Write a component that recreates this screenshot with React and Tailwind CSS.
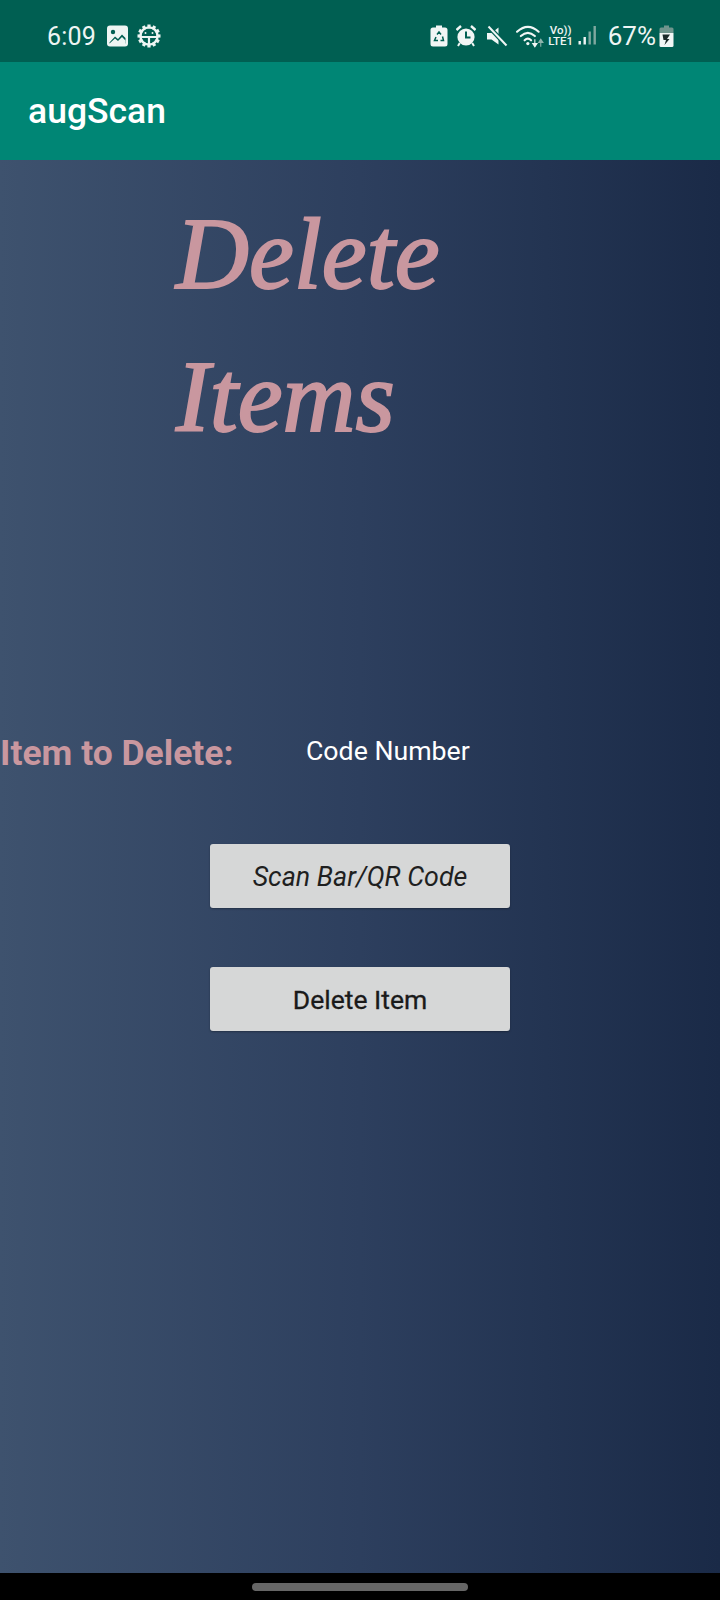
import React from "react";

const roboto = "font-['Roboto',sans-serif]";

function ImageIcon() {
  return (
    <svg width="21" height="22" viewBox="0 0 21 22" className="shrink-0">
      <rect x="0" y="0.5" width="21" height="21" rx="3" fill="#eef5f3" />
      <circle cx="6" cy="7" r="2.2" fill="#005f52" />
      <path d="M2.5 17.5 L8 11.5 L11 14 L15 9.5 L18.5 13 V18.5 H2.5 Z" fill="#005f52" />
      <path d="M2.5 18.5 L8 13.5 L11 16 L15 12 L18.5 15.5 V19 H2.5 Z" fill="#eef5f3" />
    </svg>
  );
}

function GearIcon() {
  const teeth = Array.from({ length: 12 }, (_, i) => i * 30);
  return (
    <svg width="24" height="24" viewBox="0 0 24 24" className="shrink-0">
      {teeth.map((a) => (
        <rect key={a} x="10.4" y="0.5" width="3.2" height="4" fill="#eef5f3" transform={`rotate(${a} 12 12)`} />
      ))}
      <circle cx="12" cy="12" r="8.6" fill="none" stroke="#eef5f3" strokeWidth="2.4" />
      <path d="M4 13 H20 M12 13 V20" stroke="#eef5f3" strokeWidth="2.2" />
      <circle cx="8.5" cy="9" r="1" fill="#eef5f3" />
      <circle cx="15.5" cy="9" r="1" fill="#eef5f3" />
    </svg>
  );
}

function RecycleBattery() {
  return (
    <svg width="18" height="22" viewBox="0 0 18 22" className="shrink-0">
      <path d="M6 0.5 H12 V2.5 H15 Q17.5 2.5 17.5 5 V19 Q17.5 21.5 15 21.5 H3 Q0.5 21.5 0.5 19 V5 Q0.5 2.5 3 2.5 H6 Z" fill="#f1f6f5" />
      <path d="M7 9.5 L9 7 L11 9.5 M12.5 11.5 L13.5 15.5 H10.5 M8 15.5 H4.5 L6 12" fill="none" stroke="#005f52" strokeWidth="1.5" />
    </svg>
  );
}

function AlarmIcon() {
  return (
    <svg width="20" height="22" viewBox="0 0 20 22" className="shrink-0">
      <circle cx="10" cy="12" r="8.6" fill="#f1f6f5" />
      <path d="M0.5 5 L5 1 M19.5 5 L15 1" stroke="#f1f6f5" strokeWidth="2.4" />
      <path d="M3.8 18 L2 21 M16.2 18 L18 21" stroke="#f1f6f5" strokeWidth="2" />
      <path d="M10 6.5 V12.5 H14.5" fill="none" stroke="#005f52" strokeWidth="2" />
    </svg>
  );
}

function MuteIcon() {
  return (
    <svg width="22" height="22" viewBox="0 0 22 22" className="shrink-0">
      <path d="M1 8 H5.5 L12.5 2.5 V19.5 L5.5 14.5 H1 Z" fill="#f1f6f5" />
      <path d="M2.5 1.5 L20.5 20.5" stroke="#005f52" strokeWidth="4.5" />
      <path d="M2.5 1.5 L20.5 20.5" stroke="#f1f6f5" strokeWidth="2" />
    </svg>
  );
}

function WifiIcon() {
  return (
    <svg width="28" height="24" viewBox="0 0 26 22" className="shrink-0">
      <g fill="none" stroke="#f1f6f5" strokeWidth="2" strokeLinecap="round">
        <path d="M1 7 Q11 -2 21 7" />
        <path d="M4.5 11 Q11 5 17.5 11" />
        <path d="M8 15 Q11 12 14 15" />
      </g>
      <circle cx="11" cy="18" r="1.5" fill="#f1f6f5" />
      <path d="M17.5 14 V20 M15.5 18 L17.5 21 L19.5 18 Z" stroke="#f1f6f5" strokeWidth="1" fill="#f1f6f5" />
      <path d="M23 21 V15 M21 17 L23 14 L25 17 Z" stroke="#8fb5ad" strokeWidth="1" fill="#8fb5ad" />
    </svg>
  );
}

function SignalIcon() {
  return (
    <svg width="19" height="22" viewBox="0 0 19 22" className="shrink-0">
      <rect x="0.5" y="16" width="2.4" height="3.5" fill="#f1f6f5" />
      <rect x="5.5" y="12" width="2.4" height="7.5" fill="#f1f6f5" />
      <rect x="10.5" y="6.5" width="2.4" height="13" fill="#7fa89f" />
      <rect x="15.5" y="1" width="2.4" height="18.5" fill="#7fa89f" />
    </svg>
  );
}

function BatteryIcon() {
  return (
    <svg width="15" height="23" viewBox="0 0 15 23" className="shrink-0">
      <path d="M5 0.5 H10 V2.5 H13 Q14.5 2.5 14.5 4 V8 H0.5 V4 Q0.5 2.5 2 2.5 H5 Z" fill="#6f958d" />
      <path d="M0.5 8 H14.5 V20.5 Q14.5 22 13 22 H2 Q0.5 22 0.5 20.5 Z" fill="#f1f6f5" />
      <path d="M3.5 9.5 H11 L8 14 H10.5 L5.5 20 L7 15 H4.5 Z" fill="#1b2a2a" />
    </svg>
  );
}

export default function App() {
  return (
    <div className={`flex h-[1600px] w-[720px] flex-col overflow-hidden bg-black ${roboto}`}>
      <div className="flex h-[62px] shrink-0 items-center bg-[#005f52] pl-[47px] pr-[46px] pt-[10px] text-[#eef5f3]">
        <span className="w-[49px] text-[25px] leading-none tracking-[0.2px]">6:09</span>
        <span className="ml-[11px] flex items-center gap-[9px]">
          <ImageIcon />
          <GearIcon />
        </span>
        <span className="ml-auto flex items-center">
          <RecycleBattery />
          <span className="ml-[8px]"><AlarmIcon /></span>
          <span className="ml-[10px]"><MuteIcon /></span>
          <span className="ml-[8px]"><WifiIcon /></span>
          <span className="ml-[3px] flex w-[28px] flex-col items-center text-[11.5px] font-medium leading-[11.5px]">
            <span>Vo))</span>
            <span>LTE1</span>
          </span>
          <span className="ml-[3px]"><SignalIcon /></span>
          <span className="ml-[11px] text-[26px] leading-none">67%</span>
          <span className="ml-[3px]"><BatteryIcon /></span>
        </span>
      </div>

      <div className="flex h-[98px] shrink-0 items-center bg-[#008675] pl-[28px] pt-[2px] text-[35.5px] font-medium text-white">
        augScan
      </div>

      <div className="flex h-[1413px] shrink-0 flex-col bg-gradient-to-r from-[#3e526e] via-[#2d3f5e] to-[#1a2a47]">
        <div className="ml-[176px] mt-[42px] flex flex-col gap-[38px] font-['Liberation_Serif',cursive] text-[#c9979f] italic">
          <span className="h-[105px] text-[101px] leading-[105px] [-webkit-text-stroke:2px_#c9979f]">Delete</span>
          <span className="h-[105px] text-[101px] leading-[105px] [-webkit-text-stroke:2px_#c9979f]">Items</span>
        </div>

        <div className="mt-[280px] flex h-[44px] items-center">
          <span className="w-[306px] pt-[3px] text-[35.5px] font-bold whitespace-nowrap text-[#c9979f]">Item to Delete:</span>
          <span className="pb-[2px] text-[26.7px] text-white">Code Number</span>
        </div>

        <div className="ml-[210px] mt-[70px] flex w-[300px] flex-col gap-[59px]">
          <button className="h-[64px] rounded-[3px] bg-[#d6d7d7] pt-[2px] text-[26.8px] text-[#1f1f1f] italic shadow-[0_1px_2px_rgba(0,0,0,0.3)]">
            Scan Bar/QR Code
          </button>
          <button className="h-[64px] rounded-[3px] bg-[#d6d7d7] pt-[2px] text-[26.5px] font-normal text-[#1a1a1a] [-webkit-text-stroke:0.3px_#1a1a1a] shadow-[0_1px_2px_rgba(0,0,0,0.3)]">
            Delete Item
          </button>
        </div>
      </div>

      <div className="flex h-[27px] shrink-0 items-start justify-center bg-black pt-[10px]">
        <div className="h-[8px] w-[216px] rounded-full bg-[#666666]" />
      </div>
    </div>
  );
}
